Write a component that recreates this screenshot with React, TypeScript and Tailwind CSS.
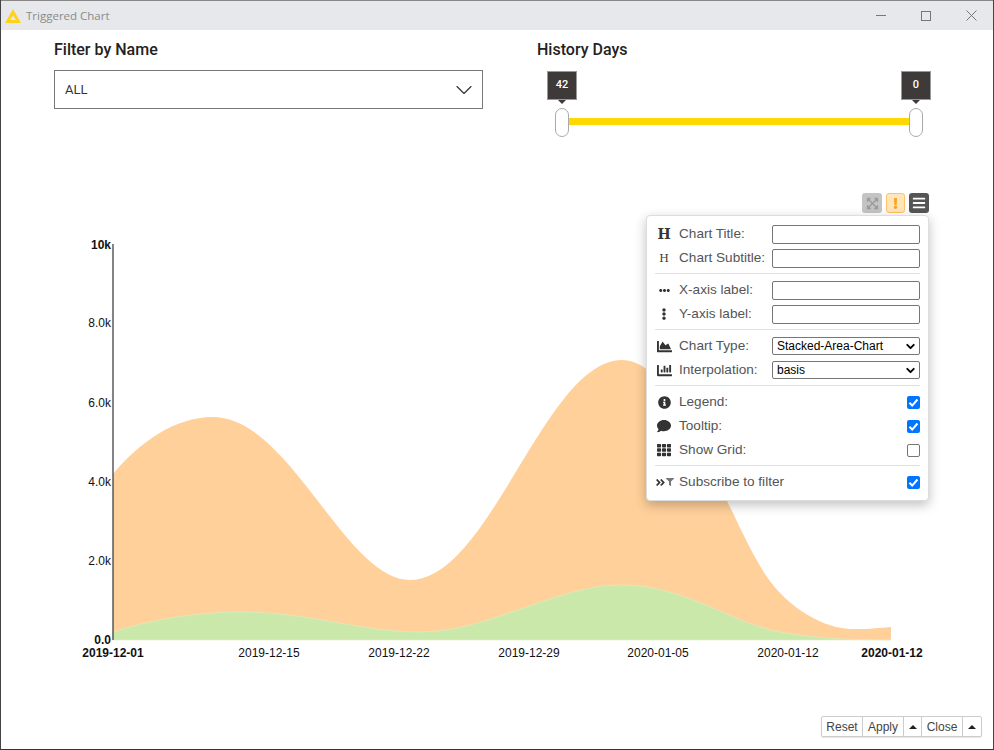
import { ChevronDown } from 'lucide-react';
import {
  FaAngleDoubleRight,
  FaBars,
  FaChartArea,
  FaChartBar,
  FaComment,
  FaEllipsisH,
  FaEllipsisV,
  FaExclamation,
  FaExpandArrowsAlt,
  FaFilter,
  FaInfoCircle,
  FaTh,
} from 'react-icons/fa';

const yTicks = [
  { label: '10k', y: 249, bold: true },
  { label: '8.0k', y: 327 },
  { label: '6.0k', y: 407 },
  { label: '4.0k', y: 486 },
  { label: '2.0k', y: 565 },
  { label: '0.0', y: 644, bold: true },
];

const xTicks = [
  { label: '2019-12-01', x: 113, bold: true },
  { label: '2019-12-15', x: 269 },
  { label: '2019-12-22', x: 399 },
  { label: '2019-12-29', x: 529 },
  { label: '2020-01-05', x: 658 },
  { label: '2020-01-12', x: 788 },
  { label: '2020-01-12', x: 892, bold: true },
];

const Chart = () => (
  <svg viewBox="1 160 992 550" className="block h-full w-full" style={{ fontFamily: '"Liberation Sans", sans-serif' }}>
    <path
      d="M113,474 C140,442 175,417 213,417 C290,417 345,580 410,580 C490,580 545,360 622,360 C680,360 725,515 767,577 C790,610 825,628 850,629 C865,629.5 880,628 891,627 L891,640 L113,640 Z"
      fill="#ffd09a"
    />
    <path
      d="M113,632 C150,620 195,612 240,612 C310,612 360,632 420,632 C490,632 555,585 622,585 C680,585 725,618 770,630 C810,639 860,640 891,640 L113,640 Z"
      fill="#cbe8ab"
      stroke="#dcefc4"
      strokeWidth="0.6"
    />
    <line x1="113" y1="244" x2="113" y2="640" stroke="#333" strokeWidth="1.2" />
    {yTicks.map((t) => (
      <text key={t.label} x="111" y={t.y} textAnchor="end" fontSize="12" fontWeight={t.bold ? 700 : 400} fill="#111">
        {t.label}
      </text>
    ))}
    {xTicks.map((t, i) => (
      <text
        key={i}
        x={t.x}
        y="657"
        textAnchor="middle"
        fontSize="12"
        fontWeight={t.bold ? 700 : 400}
        fill="#111"
      >
        {t.label}
      </text>
    ))}
  </svg>
);

const Handle = ({ value }: { value: string }) => (
  <div className="flex w-[30px] flex-col items-center">
    <div className="relative flex h-[29px] w-[30px] items-center justify-center border border-[#999] bg-[#3e3a39] font-['Roboto',sans-serif] text-[11px] font-medium text-white">
      {value}
      <div className="absolute -bottom-[5px] left-1/2 -ml-[4px] h-0 w-0 border-x-[4px] border-t-[4px] border-x-transparent border-t-[#3e3a39]" />
    </div>
    <div className="mt-[8px] h-[29px] w-[14px] rounded-[7px] border border-[#aaa] bg-white" />
  </div>
);

const TextRow = ({ icon, label }: { icon: React.ReactNode; label: string }) => (
  <div className="flex h-[24px] items-center">
    <div className="flex w-[24px] justify-center pr-[6px] text-[#333]">{icon}</div>
    <span className="w-[93px] whitespace-nowrap">{label}</span>
    <input className="h-[19px] w-[148px] rounded-[2px] border border-[#767676] bg-white" />
  </div>
);

const SelectRow = ({ icon, label, value }: { icon: React.ReactNode; label: string; value: string }) => (
  <div className="flex h-[24px] items-center">
    <div className="flex w-[24px] justify-center pr-[6px] text-[#333]">{icon}</div>
    <span className="w-[93px] whitespace-nowrap">{label}</span>
    <div className="flex h-[18px] w-[148px] items-center justify-between rounded-[2px] border border-[#767676] bg-white pl-[4px] pr-[2px] text-[12px] text-black">
      {value}
      <ChevronDown size={13} strokeWidth={3.5} />
    </div>
  </div>
);

const CheckRow = ({ icon, label, checked }: { icon: React.ReactNode; label: string; checked: boolean }) => (
  <div className="flex h-[24px] items-center">
    <div className="flex w-[24px] justify-center pr-[6px] text-[#333]">{icon}</div>
    <span className="flex-1 whitespace-nowrap">{label}</span>
    {checked ? (
      <div className="flex h-[13px] w-[13px] items-center justify-center rounded-[2px] bg-[#0075ff]">
        <svg viewBox="0 0 13 13" className="h-[13px] w-[13px]">
          <path d="M2.5 6.8 L5.2 9.6 L10.5 3.5" fill="none" stroke="#fff" strokeWidth="2" />
        </svg>
      </div>
    ) : (
      <div className="h-[13px] w-[13px] rounded-[2px] border border-[#767676] bg-white" />
    )}
  </div>
);

const Divider = () => <div className="mb-[4px] mt-[3px] h-px w-full bg-[#e0e0e0]" />;

const ChartMenu = () => (
  <div className="absolute left-[645px] top-[55px] w-[283px] rounded-[4px] border border-[#ddd] bg-white pb-[6px] pl-[8px] pr-[8px] pt-[6px] font-['Liberation_Sans',sans-serif] text-[13.6px] text-[#555] shadow-[0_4px_12px_rgba(0,0,0,0.25)]">
    <TextRow icon={<span className="font-['DejaVu_Serif',serif] text-[14px] font-bold leading-none">H</span>} label="Chart Title:" />
    <TextRow icon={<span className="font-['DejaVu_Serif',serif] text-[11px] leading-none">H</span>} label="Chart Subtitle:" />
    <Divider />
    <TextRow icon={<FaEllipsisH size={11} />} label="X-axis label:" />
    <TextRow icon={<FaEllipsisV size={12} />} label="Y-axis label:" />
    <Divider />
    <SelectRow icon={<FaChartArea size={15} />} label="Chart Type:" value="Stacked-Area-Chart" />
    <SelectRow icon={<FaChartBar size={15} />} label="Interpolation:" value="basis" />
    <Divider />
    <CheckRow icon={<FaInfoCircle size={13} />} label="Legend:" checked />
    <CheckRow icon={<FaComment size={14} />} label="Tooltip:" checked />
    <CheckRow icon={<FaTh size={14} />} label="Show Grid:" checked={false} />
    <Divider />
    <CheckRow
      icon={
        <span className="flex items-center">
          <FaAngleDoubleRight size={11} />
          <FaFilter size={8} className="text-[#777]" />
        </span>
      }
      label="Subscribe to filter"
      checked
    />
  </div>
);

const FooterButton = ({ children, wide }: { children: React.ReactNode; wide?: boolean }) => (
  <div className={`flex h-full items-center justify-center border-r border-[#ccc] last:border-r-0 ${wide ? 'w-[41px]' : 'w-[18px]'}`}>
    {children}
  </div>
);

const Caret = () => <div className="h-0 w-0 border-x-[4px] border-b-[4px] border-x-transparent border-b-[#222]" />;

export default function App() {
  return (
    <div className="flex h-[750px] w-[994px] flex-col overflow-hidden border-x border-b border-x-[#444] border-b-[#333] bg-white">
      <div className="flex h-[30px] shrink-0 items-center border-t border-t-[#888] bg-[#e6e8eb] pl-[4px]">
        <svg viewBox="0 0 16 14" className="h-[14px] w-[16px]">
          <path d="M8 0 L16 14 L0 14 Z" fill="#ffd21e" />
          <path d="M8 6.5 L5 11 L11 11 Z" fill="#e6e8eb" />
        </svg>
        <span className="ml-[5px] font-['Open_Sans',sans-serif] text-[11.5px] text-[#8a8a8a]">Triggered Chart</span>
        <div className="ml-auto flex items-center pr-[16px] text-[#777]">
          <div className="h-px w-[10px] bg-[#777]" />
          <div className="ml-[35px] h-[10px] w-[10px] border border-[#777]" />
          <svg viewBox="0 0 11 11" className="ml-[35px] h-[11px] w-[11px]">
            <path d="M0.5 0.5 L10.5 10.5 M10.5 0.5 L0.5 10.5" stroke="#777" strokeWidth="1" />
          </svg>
        </div>
      </div>

      <div className="flex h-[130px] shrink-0 pl-[53px] font-['Roboto',sans-serif]">
        <div className="w-[429px]">
          <h2 className="mt-[10px] text-[16px] font-medium leading-[20px] text-[#222]">Filter by Name</h2>
          <div className="mt-[10px] flex h-[39px] items-center justify-between border border-[#777] pl-[10px] pr-[4px] text-[13px] text-[#333]">
            ALL
            <ChevronDown size={28} strokeWidth={1} className="text-[#333]" />
          </div>
        </div>
        <div className="ml-[54px] w-[400px]">
          <h2 className="mt-[10px] text-[16px] font-medium leading-[20px] text-[#222]">History Days</h2>
          <div className="relative ml-[10px] mt-[11px] flex w-[384px] justify-between">
            <div className="absolute left-[20px] right-[13px] top-[47px] h-[7px] bg-[#ffd800]" />
            <div className="relative">
              <Handle value="42" />
            </div>
            <div className="relative">
              <Handle value="0" />
            </div>
          </div>
        </div>
      </div>

      <div className="relative min-h-0 flex-1">
        <Chart />
        <div className="absolute right-[64px] top-[33px] flex gap-[4px]">
          <div className="flex h-[20px] w-[20px] items-center justify-center rounded-[3px] bg-[#c4c4c4] text-[#9c9c9c]">
            <FaExpandArrowsAlt size={13} />
          </div>
          <div className="flex h-[20px] w-[19px] items-center justify-center rounded-[3px] border border-[#ffc266] bg-[#ffe6bb] text-[#f5a623]">
            <FaExclamation size={11} />
          </div>
          <div className="flex h-[20px] w-[20px] items-center justify-center rounded-[3px] bg-[#555] text-white">
            <FaBars size={14} />
          </div>
        </div>
        <ChartMenu />
      </div>

      <div className="flex h-[39px] shrink-0 justify-end pr-[11px] pt-[6px]">
        <div className="flex h-[21px] items-center rounded-[2px] border border-[#ccc] bg-white font-['Liberation_Sans',sans-serif] text-[12px] text-[#444] shadow-[0_1px_1px_rgba(0,0,0,0.1)]">
          <FooterButton wide>Reset</FooterButton>
          <FooterButton wide>Apply</FooterButton>
          <FooterButton>
            <Caret />
          </FooterButton>
          <FooterButton wide>Close</FooterButton>
          <FooterButton>
            <Caret />
          </FooterButton>
        </div>
      </div>
    </div>
  );
}
